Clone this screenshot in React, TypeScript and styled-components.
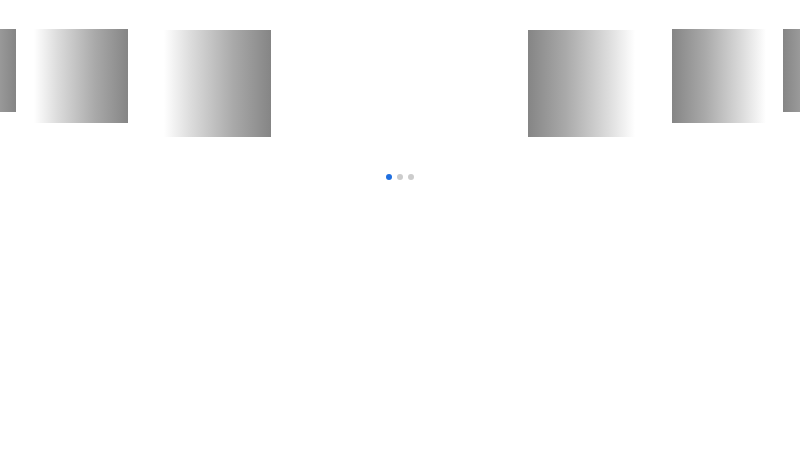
import styled, { createGlobalStyle } from 'styled-components'

const GlobalStyle = createGlobalStyle`
  html, body {
    margin: 0;
    padding: 0;
    background: #ffffff;
    font-family: "Liberation Sans", Arial, sans-serif;
  }
`

const StyledPage = styled.div`
  width: 800px;
  height: 450px;
  overflow: hidden;
  background: #ffffff;
`

const StyledTrack = styled.div`
  display: flex;
  justify-content: center;
  align-items: flex-start;
  padding-top: 29px;
  margin-left: -1px;
  height: 108px;
`

type Side = 'left' | 'right'

const StyledSlide = styled.div<{ $size: number; $side: Side; $gap: number; $drop: number }>`
  flex: 0 0 ${(p) => p.$size}px;
  height: ${(p) => p.$size}px;
  margin-top: ${(p) => p.$drop}px;
  margin-${(p) => (p.$side === 'left' ? 'right' : 'left')}: ${(p) => p.$gap}px;
  background: linear-gradient(
    ${(p) => (p.$side === 'left' ? 'to right' : 'to left')},
    #ffffff 0%,
    #dcdcdc 25%,
    #a9a9a9 65%,
    #858585 100%
  );
`

const StyledActiveSlide = styled.div`
  flex: 0 0 257px;
  height: 107px;
  background: #ffffff;
`

const StyledDots = styled.div`
  display: flex;
  justify-content: center;
  gap: 5px;
  margin-top: 37px;
`

const StyledDot = styled.span<{ $active?: boolean }>`
  width: 6px;
  height: 6px;
  border-radius: 50%;
  background: ${(p) => (p.$active ? '#1f6fe0' : '#cccccc')};
`

const leftSlides = [
  { size: 83, gap: 18, drop: 0 },
  { size: 94, gap: 36, drop: 0 },
  { size: 107, gap: 0, drop: 1 },
]

const rightSlides = [
  { size: 107, gap: 0, drop: 1 },
  { size: 94, gap: 37, drop: 0 },
  { size: 83, gap: 17, drop: 0 },
]

export default function App() {
  return (
    <>
      <GlobalStyle />
      <StyledPage>
        <StyledTrack>
          {leftSlides.map((s, i) => (
            <StyledSlide key={'l' + i} $size={s.size} $gap={s.gap} $drop={s.drop} $side="left" />
          ))}
          <StyledActiveSlide />
          {rightSlides.map((s, i) => (
            <StyledSlide key={'r' + i} $size={s.size} $gap={s.gap} $drop={s.drop} $side="right" />
          ))}
        </StyledTrack>
        <StyledDots>
          <StyledDot $active />
          <StyledDot />
          <StyledDot />
        </StyledDots>
      </StyledPage>
    </>
  )
}
